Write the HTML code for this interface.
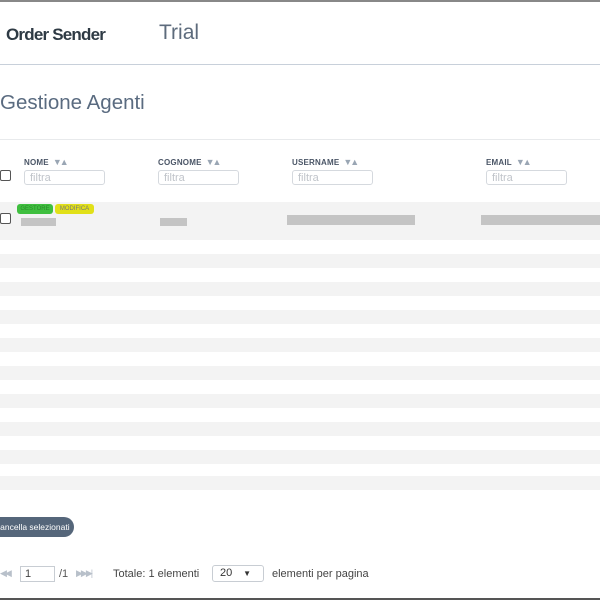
<!DOCTYPE html>
<html><head><style>
body{margin:0;width:600px;height:600px;overflow:hidden;background:#fff;font-family:"Liberation Sans",sans-serif;position:relative}
.a{position:absolute}
.th{font-size:8px;font-weight:bold;color:#4a5566;letter-spacing:.2px}
.th span{color:#9aa6b4;font-size:9px;letter-spacing:-2px;margin-left:4px}
.f{position:absolute;height:15px;width:81px;border:1px solid #d5d9de;border-radius:3px;font-size:11px;color:#c0c4ca;padding-left:5px;box-sizing:border-box;line-height:14px}
.cb{position:absolute;width:9px;height:9px;border:1px solid #555;border-radius:2px;background:#fff}
.s{position:absolute;left:0;width:600px;height:14px;background:#f3f3f3}
.g{position:absolute;background:#c4c4c4;height:10px}
</style></head><body>
<div class="a" style="left:0;top:0;width:600px;height:2px;background:#888"></div>
<div class="a" style="left:0;top:598px;width:600px;height:2px;background:#555"></div>
<div class="a" style="left:6px;top:25px;font-size:17px;font-weight:bold;color:#2e3a44;letter-spacing:-0.8px">Order Sender</div>
<div class="a" style="left:159px;top:21px;font-size:21px;color:#5d6b7c">Trial</div>
<div class="a" style="left:0;top:64px;width:600px;height:1px;background:#c8d0da"></div>
<div class="a" style="left:0;top:91px;font-size:20.5px;color:#5a6b80">Gestione Agenti</div>
<div class="a" style="left:0;top:139px;width:600px;height:1px;background:#e8eaec"></div>
<div class="cb" style="left:0;top:170px"></div>
<div class="a th" style="left:24px;top:157px">NOME<span>▼▲</span></div>
<div class="a th" style="left:158px;top:157px">COGNOME<span>▼▲</span></div>
<div class="a th" style="left:292px;top:157px">USERNAME<span>▼▲</span></div>
<div class="a th" style="left:486px;top:157px">EMAIL<span>▼▲</span></div>
<div class="f" style="left:24px;top:170px">filtra</div>
<div class="f" style="left:158px;top:170px">filtra</div>
<div class="f" style="left:292px;top:170px">filtra</div>
<div class="f" style="left:486px;top:170px">filtra</div>
<div class="a" style="left:0;top:202px;width:600px;height:38px;background:#f3f3f3"></div>
<div class="cb" style="left:0;top:213px"></div>
<div class="a" style="left:17px;top:204px;width:36px;height:10px;background:#3fbf3f;border-radius:3px;font-size:6px;color:#2a8a2a;line-height:10px;text-align:center">GESTORE</div>
<div class="a" style="left:55px;top:204px;width:39px;height:10px;background:#e1e018;border-radius:3px;font-size:6px;color:#777;line-height:10px;text-align:center">MODIFICA</div>
<div class="g" style="left:21px;top:218px;width:35px;height:8px"></div>
<div class="g" style="left:160px;top:218px;width:27px;height:8px"></div>
<div class="g" style="left:287px;top:215px;width:128px"></div>
<div class="g" style="left:481px;top:215px;width:119px"></div>
<div class="s" style="top:254px"></div><div class="s" style="top:282px"></div><div class="s" style="top:310px"></div>
<div class="s" style="top:338px"></div><div class="s" style="top:366px"></div><div class="s" style="top:394px"></div>
<div class="s" style="top:422px"></div><div class="s" style="top:450px"></div><div class="s" style="top:476px"></div>
<div class="a" style="left:-10px;top:517px;width:84px;height:20px;background:#55667a;border-radius:10px"></div>
<div class="a" style="left:-6px;top:517px;height:20px;color:#fff;font-size:8.5px;line-height:20px;white-space:nowrap">Cancella selezionati</div>
<div class="a" style="left:0;top:568px;font-size:9px;color:#b8c0ca;letter-spacing:-2px">◀◀</div>
<div class="a" style="left:20px;top:566px;width:35px;height:16px;border:1px solid #c8cdd3;box-sizing:border-box;font-size:11px;color:#444;padding-left:4px;line-height:14px">1</div>
<div class="a" style="left:59px;top:568px;font-size:11px;color:#555">/1</div>
<div class="a" style="left:76px;top:568px;font-size:9px;color:#b8c0ca;letter-spacing:-2px">▶▶▶|</div>
<div class="a" style="left:113px;top:568px;font-size:11px;color:#444">Totale: 1 elementi</div>
<div class="a" style="left:212px;top:565px;width:52px;height:17px;border:1px solid #c8cdd3;border-radius:3px;box-sizing:border-box;font-size:11px;color:#333;padding-left:7px;line-height:15px">20<span style="position:absolute;right:12px;font-size:8px">▼</span></div>
<div class="a" style="left:272px;top:568px;font-size:11px;color:#444">elementi per pagina</div>
</body></html>
